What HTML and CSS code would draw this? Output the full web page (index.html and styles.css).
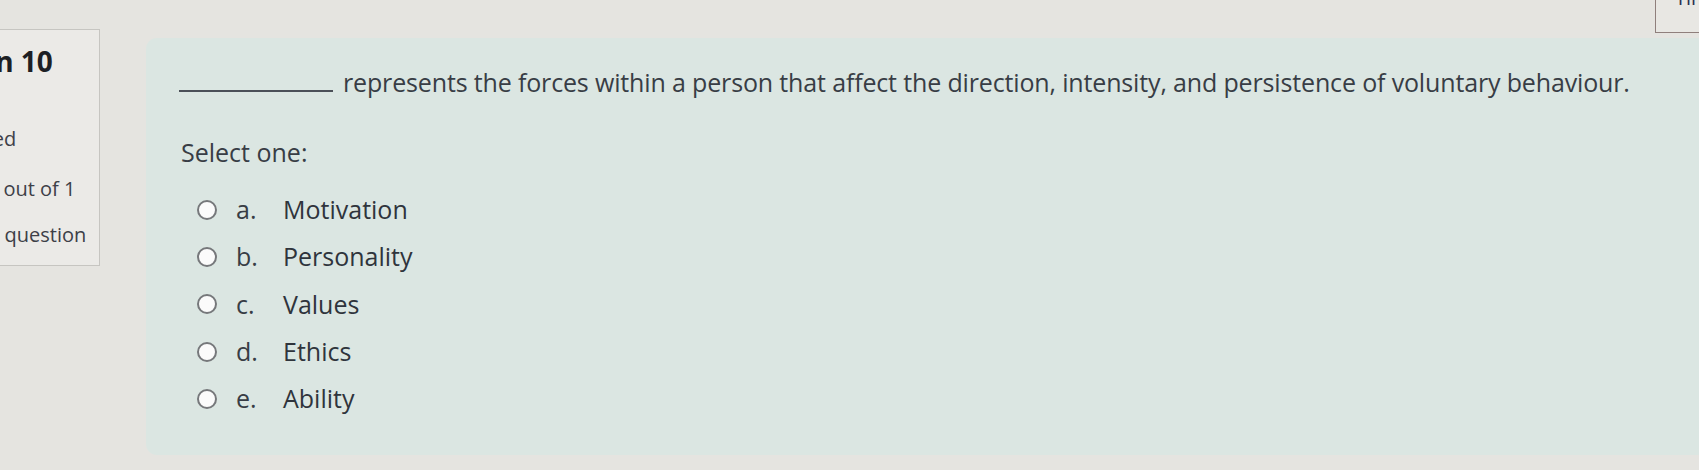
FILE: index.html
```html
<!DOCTYPE html>
<html lang="en">
<head>
<meta charset="utf-8">
<title>Question 10</title>
<link rel="stylesheet" href="styles.css">
</head>
<body>
<div class="timer">Time left 0:42:10</div>
<div class="page">
  <aside class="info">
    <h3 class="qno">Question 10</h3>
    <div class="state">Not yet answered</div>
    <div class="grade">Marked out of 1</div>
    <div class="flag">Flag question</div>
  </aside>
  <section class="content">
    <p class="qtext"><span class="blank"></span>represents the forces within a person that affect the direction, intensity, and persistence of voluntary behaviour.</p>
    <p class="prompt">Select one:</p>
    <div class="answers">
      <label class="opt"><span class="radio"></span><span class="num">a.</span><span class="lbl">Motivation</span></label>
      <label class="opt"><span class="radio"></span><span class="num">b.</span><span class="lbl">Personality</span></label>
      <label class="opt"><span class="radio"></span><span class="num">c.</span><span class="lbl">Values</span></label>
      <label class="opt"><span class="radio"></span><span class="num">d.</span><span class="lbl">Ethics</span></label>
      <label class="opt"><span class="radio"></span><span class="num">e.</span><span class="lbl">Ability</span></label>
    </div>
  </section>
</div>
</body>
</html>
```
FILE: styles.css
```css
html, body {
  margin: 0;
  padding: 0;
}
body {
  width: 1699px;
  height: 470px;
  overflow: hidden;
  background: #e5e4e0;
  font-family: "Open Sans", "Noto Sans", sans-serif;
  color: #383d45;
  position: relative;
}
.timer {
  position: absolute;
  left: 1655px;
  top: -20px;
  width: 200px;
  height: 53px;
  box-sizing: border-box;
  border: 1px solid #8f7f7c;
  background: #e8e7e3;
  padding: 0 0 0 19px;
  font-size: 20px;
  line-height: 33px;
  color: #2b3050;
  white-space: nowrap;
}
.page {
  display: flex;
  align-items: flex-start;
  padding-top: 29px;
}
.info {
  flex: none;
  margin-left: -220px;
  width: 320px;
  height: 237px;
  box-sizing: border-box;
  border: 1px solid #c6c5c1;
  background: #ebeae7;
  padding: 12px 0 0 60px;
  white-space: nowrap;
}
.qno {
  margin: 0 0 0 45px;
  font-size: 28px;
  font-weight: 700;
  line-height: 38px;
  color: #1d1f24;
}
.state, .grade, .flag {
  font-size: 20px;
  line-height: 27px;
  color: #3d4048;
}
.state {
  margin: 45px 0 0 11px;
}
.grade {
  margin: 23px 0 0 86px;
}
.flag {
  margin: 19px 0 0 121px;
}
.content {
  flex: 1;
  margin-left: 46px;
  margin-top: 9px;
  margin-right: -40px;
  height: 417px;
  box-sizing: border-box;
  background: #dbe6e2;
  border-radius: 11px;
  padding: 27px 0 0 33px;
  font-size: 25px;
}
.qtext {
  margin: 0;
  line-height: 34px;
  white-space: nowrap;
  letter-spacing: -0.15px;
}
.blank {
  display: inline-block;
  width: 154px;
  height: 24px;
  border-bottom: 2px solid #4b5058;
  margin-right: 10px;
  vertical-align: baseline;
}
.prompt {
  margin: 36px 0 0 2px;
  line-height: 34px;
}
.answers {
  margin-top: 17px;
  display: flex;
  flex-direction: column;
}
.opt {
  display: flex;
  align-items: center;
  height: 47.3px;
  line-height: 47px;
}
.radio {
  flex: none;
  width: 20px;
  height: 20px;
  box-sizing: border-box;
  border: 2px solid #76787b;
  border-radius: 50%;
  background: #fbfbfb;
  margin-left: 18px;
  margin-right: 19px;
}
.num {
  width: 47px;
  flex: none;
}
.lbl {
  color: #2f343c;
}
```
